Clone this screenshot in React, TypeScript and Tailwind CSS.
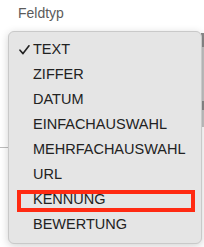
import React from "react";

const items = ["TEXT", "ZIFFER", "DATUM", "EINFACHAUSWAHL", "MEHRFACHAUSWAHL", "URL", "KENNUNG", "BEWERTUNG"];

export default function App() {
  return (
    <div className="relative w-[204px] h-[247px] bg-white overflow-hidden" style={{ fontFamily: '"Liberation Sans", Arial, sans-serif' }}>
      <div className="pl-[18px] pt-[4px] text-[14px] leading-[18px] text-[#5b5b5b]">Feldtyp</div>
      <div className="absolute left-0 top-[147px] w-[8px] h-px bg-[#bdbdbd]" />
      <div className="absolute left-[201px] top-[33px] w-[3px] h-[94px] bg-[linear-gradient(to_bottom,#8a8a8a_0px,#8a8a8a_14px,#c4c4c4_14px,#c4c4c4_68px,#8a8a8a_68px,#8a8a8a_77px,#c4c4c4_77px)]" />
      <div className="relative ml-[8px] mt-[9px] w-[194px] h-[213px] rounded-[6px] border border-[#c9c9c9] bg-[#e5e5e5] shadow-[0_2px_8px_rgba(0,0,0,0.18)] py-[5px]">
        {items.map((it, i) => (
          <div key={it} className="relative flex items-center h-[25px] text-[14.5px] text-[#222]">
            <span className="flex w-[24px] pl-[10px]">
              {i === 0 && (
                <svg width="11" height="10" viewBox="0 0 11 10">
                  <path d="M1 5.2 L4 8.6 L10 0.8" fill="none" stroke="#222" strokeWidth="1.6" strokeLinecap="round" strokeLinejoin="round" />
                </svg>
              )}
            </span>
            <span>{it}</span>
            {it === "KENNUNG" && (
              <div className="absolute left-[8px] top-[3px] w-[178px] h-[22px] border-[4px] border-[#ff2a12]" />
            )}
          </div>
        ))}
      </div>
    </div>
  );
}
